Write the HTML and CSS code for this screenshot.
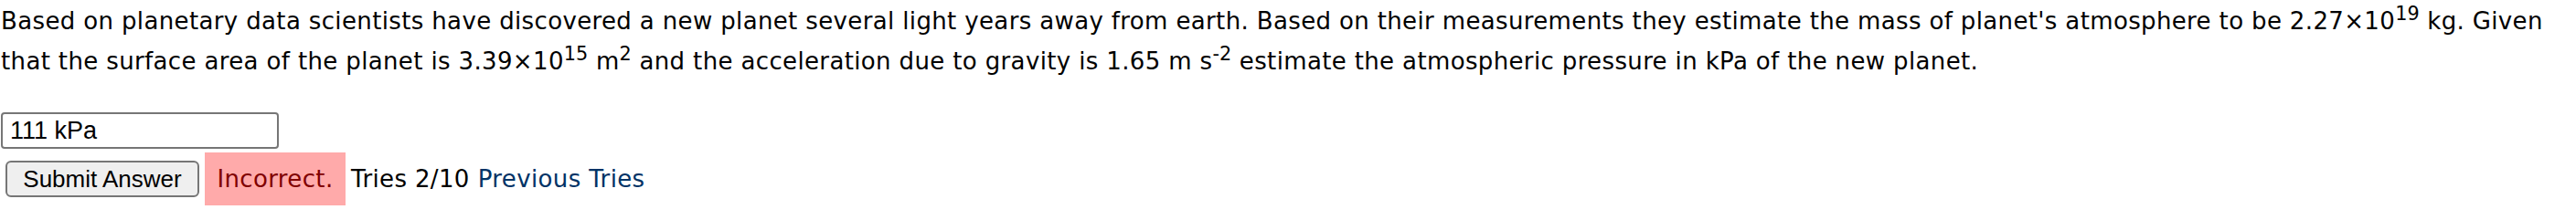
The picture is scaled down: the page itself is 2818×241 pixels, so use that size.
FILE: index.html
```html
<!DOCTYPE html>
<html>
<head>
<meta charset="utf-8">
<link rel="stylesheet" href="styles.css">
</head>
<body>
<div class="problem">
  <p class="question">Based on planetary data scientists have discovered a new planet several light years away from earth. Based on their measurements they estimate the mass of planet's atmosphere to be 2.27×10<sup>19</sup> kg. Given that the surface area of the planet is 3.39×10<sup>15</sup> m<sup>2</sup> and the acceleration due to gravity is 1.65 m s<sup>-2</sup> estimate the atmospheric pressure in kPa of the new planet.</p>
  <div class="answer-row">
    <input class="answer-input" type="text" value="111 kPa">
  </div>
  <div class="submit-row">
    <button class="submit-btn" type="button">Submit Answer</button>
    <span class="status-incorrect">Incorrect.</span>
    <span class="tries">Tries 2/10</span>
    <a class="prev-tries" href="#">Previous Tries</a>
  </div>
</div>
</body>
</html>
```
FILE: styles.css
```css
html, body {
  margin: 0;
  padding: 0;
  background: #ffffff;
}
body {
  font-family: "DejaVu Sans", Verdana, sans-serif;
  font-size: 26px;
  letter-spacing: 0.36px;
  color: #000000;
}
.problem {
  padding: 0 1px;
}
.question {
  margin: 0;
  padding-top: 1px;
  line-height: 44px;
}
.question sup {
  font-size: 0.8em;
  line-height: 0;
  vertical-align: 0.5em;
  letter-spacing: 0;
}
.answer-row {
  margin-top: 34px;
  display: flex;
}
.answer-input {
  box-sizing: border-box;
  width: 304px;
  height: 40px;
  margin: 0;
  padding: 0 8px;
  border: 2px solid #767676;
  border-radius: 4px;
  font-family: "Liberation Sans", Arial, sans-serif;
  font-size: 27px;
  letter-spacing: 0;
  color: #000;
  background: #fff;
}
.submit-row {
  display: flex;
  align-items: center;
  margin-top: 4px;
}
.submit-btn {
  box-sizing: border-box;
  width: 212px;
  height: 40px;
  margin: 0 0 0 5px;
  padding: 0;
  border: 2px solid #767676;
  border-radius: 6px;
  background: #efefef;
  font-family: "Liberation Sans", Arial, sans-serif;
  font-size: 26px;
  letter-spacing: 0;
  color: #000;
}
.status-incorrect {
  margin-left: 6px;
  box-sizing: border-box;
  width: 154px;
  justify-content: center;
  height: 58px;
  display: flex;
  align-items: center;
  background: #ffaaaa;
  color: #800000;
}
.tries {
  margin-left: 6px;
}
.prev-tries {
  margin-left: 9px;
  color: #003366;
  text-decoration: none;
}
```
